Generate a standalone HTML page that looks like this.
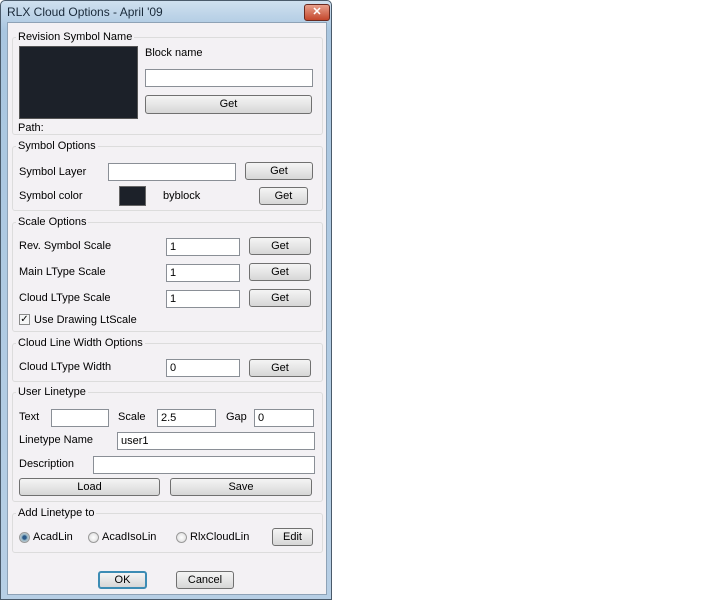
<html><head><style>
body{margin:0;width:711px;height:600px;background:#fff;position:relative;font-family:"Liberation Sans",sans-serif;font-size:11px;color:#000;overflow:hidden}
.a{position:absolute}
.win{left:0;top:0;width:332px;height:600px;background:linear-gradient(#cfe0ef,#a9c6e0 30px,#b7cfe5);border:1px solid #4a5a6a;box-sizing:border-box;border-radius:5px 5px 0 0}
.client{left:7px;top:22px;width:318px;height:571px;background:#f3f1f4;border:1px solid #8ea2b6}
.g{position:absolute;border:1px solid #dcdcdc;border-radius:3px;left:12px;width:309px}
.gl{position:absolute;background:#f3f1f4;padding:0 2px;left:16px}
.in{position:absolute;background:#fff;border:1px solid #8a8f96;box-sizing:border-box;height:18px;padding:2px 3px;font-size:11px}
.b{position:absolute;border:1px solid #707070;border-radius:3px;box-sizing:border-box;background:linear-gradient(#f4f4f4,#e6e6e6 50%,#d6d6d6);text-align:center;line-height:16px}
.t{position:absolute;white-space:nowrap}
.r{position:absolute;width:11px;height:11px;border-radius:50%;border:1px solid #9a9a9a;box-sizing:border-box;background:radial-gradient(#fff,#d8d8d8)}
</style></head><body>
<div class="a win"></div>
<div class="t" style="left:7px;top:5px;font-size:12px;color:#1a2a3a">RLX Cloud Options - April '09</div>
<div class="a" style="left:304px;top:4px;width:24px;height:15px;border-radius:3px;background:linear-gradient(#e8a08c,#c4472c);border:1px solid #6a2a20;color:#fff;font-size:11px;text-align:center;line-height:14px;font-weight:bold">✕</div>
<div class="a client"></div>

<div class="g" style="top:37px;height:96px"></div><div class="t gl" style="top:31px">Revision Symbol Name</div>
<div class="a" style="left:19px;top:46px;width:117px;height:71px;background:#1c2129;border:1px solid #555"></div>
<div class="t" style="left:145px;top:47px">Block name</div>
<div class="in" style="left:145px;top:69px;width:168px"></div>
<div class="b" style="left:145px;top:95px;width:167px;height:19px">Get</div>
<div class="t" style="left:18px;top:122px">Path:</div>

<div class="g" style="top:146px;height:63px"></div><div class="t gl" style="top:140px">Symbol Options</div>
<div class="t" style="left:19px;top:166px">Symbol Layer</div>
<div class="in" style="left:108px;top:163px;width:128px"></div>
<div class="b" style="left:245px;top:162px;width:68px;height:18px">Get</div>
<div class="t" style="left:19px;top:190px">Symbol color</div>
<div class="a" style="left:119px;top:186px;width:27px;height:20px;background:#1c2129;border:1px solid #666;box-sizing:border-box"></div>
<div class="t" style="left:163px;top:190px">byblock</div>
<div class="b" style="left:259px;top:187px;width:49px;height:18px">Get</div>

<div class="g" style="top:222px;height:108px"></div><div class="t gl" style="top:216px">Scale Options</div>
<div class="t" style="left:19px;top:240px">Rev. Symbol Scale</div>
<div class="in" style="left:166px;top:238px;width:74px">1</div>
<div class="b" style="left:249px;top:237px;width:62px;height:18px">Get</div>
<div class="t" style="left:19px;top:266px">Main LType Scale</div>
<div class="in" style="left:166px;top:264px;width:74px">1</div>
<div class="b" style="left:249px;top:263px;width:62px;height:18px">Get</div>
<div class="t" style="left:19px;top:292px">Cloud LType Scale</div>
<div class="in" style="left:166px;top:290px;width:74px">1</div>
<div class="b" style="left:249px;top:289px;width:62px;height:18px">Get</div>
<div class="a" style="left:19px;top:314px;width:11px;height:11px;border:1px solid #8a8a8a;box-sizing:border-box;background:#f6f6f6;font-size:10px;line-height:9px;text-align:center">✓</div>
<div class="t" style="left:34px;top:314px">Use Drawing LtScale</div>

<div class="g" style="top:343px;height:37px"></div><div class="t gl" style="top:337px">Cloud Line Width Options</div>
<div class="t" style="left:19px;top:361px">Cloud LType Width</div>
<div class="in" style="left:166px;top:359px;width:74px">0</div>
<div class="b" style="left:249px;top:359px;width:62px;height:18px">Get</div>

<div class="g" style="top:392px;height:108px"></div><div class="t gl" style="top:386px">User Linetype</div>
<div class="t" style="left:19px;top:411px">Text</div>
<div class="in" style="left:51px;top:409px;width:58px"></div>
<div class="t" style="left:118px;top:411px">Scale</div>
<div class="in" style="left:157px;top:409px;width:59px">2.5</div>
<div class="t" style="left:226px;top:411px">Gap</div>
<div class="in" style="left:254px;top:409px;width:60px">0</div>
<div class="t" style="left:19px;top:434px">Linetype Name</div>
<div class="in" style="left:117px;top:432px;width:198px">user1</div>
<div class="t" style="left:19px;top:458px">Description</div>
<div class="in" style="left:93px;top:456px;width:222px"></div>
<div class="b" style="left:19px;top:478px;width:141px;height:18px">Load</div>
<div class="b" style="left:170px;top:478px;width:142px;height:18px">Save</div>

<div class="g" style="top:513px;height:38px"></div><div class="t gl" style="top:507px">Add Linetype to</div>
<div class="r" style="left:19px;top:532px;background:radial-gradient(#2a5a8a 30%,#8ab 40%,#eee)"></div>
<div class="t" style="left:33px;top:531px">AcadLin</div>
<div class="r" style="left:88px;top:532px"></div>
<div class="t" style="left:102px;top:531px">AcadIsoLin</div>
<div class="r" style="left:176px;top:532px"></div>
<div class="t" style="left:190px;top:531px">RlxCloudLin</div>
<div class="b" style="left:272px;top:528px;width:41px;height:18px">Edit</div>

<div class="b" style="left:98px;top:571px;width:49px;height:18px;border:2px solid #3c8cb4;line-height:14px">OK</div>
<div class="b" style="left:176px;top:571px;width:58px;height:18px">Cancel</div>
</body></html>
